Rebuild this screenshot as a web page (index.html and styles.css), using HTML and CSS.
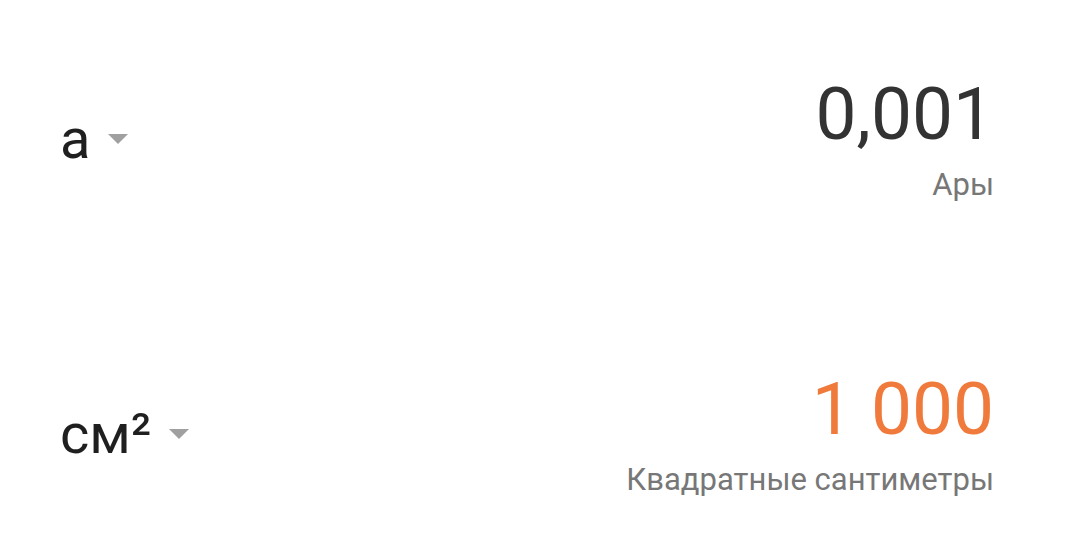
FILE: index.html
```html
<!DOCTYPE html>
<html lang="ru">
<head>
  <meta charset="UTF-8">
  <title>Конвертер площади</title>
  <link rel="stylesheet" href="styles.css">
</head>
<body>

  <div class="konwerter">
    <div class="wiersz">
      <div class="jednostka">а <span class="strzalka"></span></div>
      <div class="wynik">
        <div class="liczba">0,001</div>
        <div class="nazwa">Ары</div>
      </div>
    </div>

    <div class="wiersz">
      <div class="jednostka">см² <span class="strzalka"></span></div>
      <div class="wynik">
        <div class="liczba aktywna">1 000</div>
        <div class="nazwa">Квадратные сантиметры</div>
      </div>
    </div>
  </div>

</body>
</html>
```

FILE: styles.css
```css
body {
  background-color: #ffffff;
  font-family: 'Roboto', 'Noto Sans', sans-serif;
  margin: 0;
  padding: 0;
  overflow: hidden;
}

.konwerter {
  display: flex;
  flex-direction: column;
  gap: 18px;
}

.wiersz {
  display: flex;
  justify-content: space-between;
  align-items: center;
  height: 277px;
  padding: 0 73px 0 60px;
}

.jednostka {
  display: flex;
  align-items: center;
  gap: 18px;
  font-size: 56px;
  color: #1f1f1f;
}

.strzalka {
  width: 0;
  height: 0;
  border-left: 10px solid transparent;
  border-right: 10px solid transparent;
  border-top: 10px solid #a0a0a0;
}

.wynik {
  text-align: right;
}

.liczba {
  font-size: 73px;
  color: #333333;
  line-height: 1.1;
}

.liczba.aktywna {
  color: #f07a3c;
}

.nazwa {
  font-size: 31px;
  color: #777777;
  margin-top: 11px;
}
```
